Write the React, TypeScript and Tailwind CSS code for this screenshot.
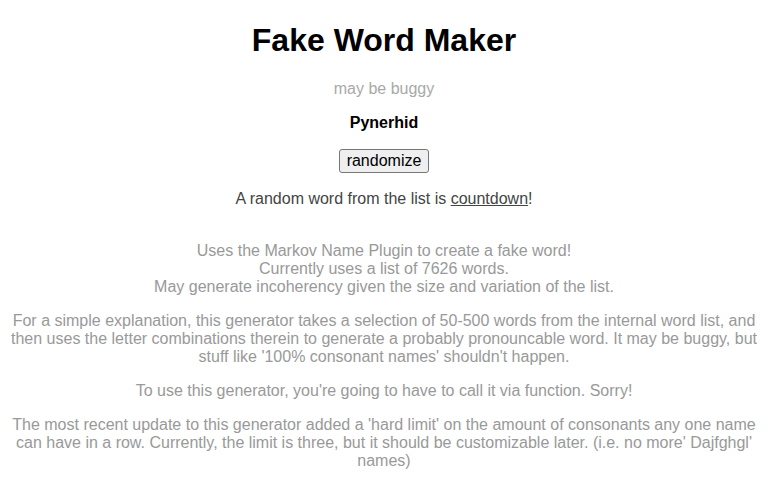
import { useState } from 'react';

const WORDS = ['countdown', 'lantern', 'harbor', 'meadow', 'crystal', 'thunder', 'whisper'];
const FAKES = ['Pynerhid', 'Dorvelin', 'Strambit', 'Quenlor', 'Maphiren'];

export default function App() {
  const [fake, setFake] = useState(0);
  const [word] = useState(0);

  return (
    <div className="min-h-[480px] bg-white text-center font-['Liberation_Sans',Arial,sans-serif] text-[16px] leading-[18px] text-black">
      <h1 className="pt-[22px] pb-[21px] text-[32px] font-bold leading-[37px]">Fake Word Maker</h1>
      <p className="text-[#a9a9a9]">may be buggy</p>
      <p className="mt-4 font-bold">{FAKES[fake]}</p>
      <div className="mt-[17px] flex justify-center">
        <button
          onClick={() => setFake((fake + 1) % FAKES.length)}
          className="h-[24px] rounded-[3px] border border-[#767676] bg-[#efefef] px-[7px] text-[16px] leading-[20px] text-black hover:bg-[#e5e5e5]"
        >
          randomize
        </button>
      </div>
      <p className="mt-[17px] text-[#444]">
        A random word from the list is <span className="underline">{WORDS[word]}</span>!
      </p>

      {/* about section */}
      <div className="mt-[34px] px-[8px] text-[#999]">
        <p>
          Uses the Markov Name Plugin to create a fake word!
          <br />
          Currently uses a list of 7626 words.
          <br />
          May generate incoherency given the size and variation of the list.
        </p>
        <p className="mt-4">
          For a simple explanation, this generator takes a selection of 50-500 words from the internal word list, and
          then uses the letter combinations therein to generate a probably pronouncable word. It may be buggy, but
          stuff like '100% consonant names' shouldn't happen.
        </p>
        <p className="mt-4">To use this generator, you're going to have to call it via function. Sorry!</p>
        <p className="mt-4">
          The most recent update to this generator added a 'hard limit' on the amount of consonants any one name can
          have in a row. Currently, the limit is three, but it should be customizable later. (i.e. no more' Dajfghgl'
          names)
        </p>
      </div>
    </div>
  );
}
